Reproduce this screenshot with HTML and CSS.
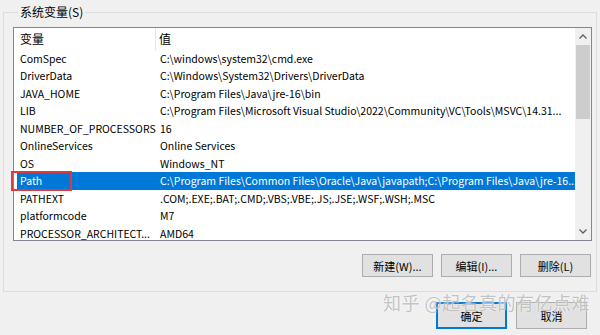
FILE: index.html
```html
<!DOCTYPE html>
<html lang="zh-CN">
<head>
  <meta charset="UTF-8" />
  <title>系统变量</title>
  <link rel="stylesheet" href="styles.css">
</head>
<body>

  <!-- System variables group -->
  <fieldset class="group">
    <legend>系统变量(S)</legend>

    <div class="list-wrap">
      <div class="list">
        <div class="list-body">
          <div class="list-head">
            <div class="head-name">变量</div>
            <div class="head-value">值</div>
          </div>
          <div class="row"><span class="name">ComSpec</span><span class="value">C:\windows\system32\cmd.exe</span></div>
          <div class="row"><span class="name">DriverData</span><span class="value">C:\Windows\System32\Drivers\DriverData</span></div>
          <div class="row"><span class="name">JAVA_HOME</span><span class="value">C:\Program Files\Java\jre-16\bin</span></div>
          <div class="row"><span class="name">LIB</span><span class="value">C:\Program Files\Microsoft Visual Studio\2022\Community\VC\Tools\MSVC\14.31...</span></div>
          <div class="row"><span class="name">NUMBER_OF_PROCESSORS</span><span class="value">16</span></div>
          <div class="row"><span class="name">OnlineServices</span><span class="value">Online Services</span></div>
          <div class="row"><span class="name">OS</span><span class="value">Windows_NT</span></div>
          <div class="row selected"><span class="name">Path</span><span class="value">C:\Program Files\Common Files\Oracle\Java\javapath;C:\Program Files\Java\jre-16...</span></div>
          <div class="row"><span class="name">PATHEXT</span><span class="value">.COM;.EXE;.BAT;.CMD;.VBS;.VBE;.JS;.JSE;.WSF;.WSH;.MSC</span></div>
          <div class="row"><span class="name">platformcode</span><span class="value">M7</span></div>
          <div class="row"><span class="name">PROCESSOR_ARCHITECT...</span><span class="value">AMD64</span></div>
        </div>

        <!-- Vertical scrollbar -->
        <div class="scrollbar">
          <svg class="arrow" width="8" height="5" viewBox="0 0 8 5"><path d="M0.5 4.5 L4 1 L7.5 4.5" fill="none" stroke="#606060" stroke-width="1.3"/></svg>
          <div class="track">
            <div class="thumb"></div>
          </div>
          <svg class="arrow" width="8" height="5" viewBox="0 0 8 5"><path d="M0.5 0.5 L4 4 L7.5 0.5" fill="none" stroke="#606060" stroke-width="1.3"/></svg>
        </div>
      </div>

      <!-- Red highlight drawn over the Path entry -->
      <div class="mark"></div>
    </div>

    <div class="actions">
      <button class="btn">新建(W)...</button>
      <button class="btn">编辑(I)...</button>
      <button class="btn">删除(L)</button>
    </div>
  </fieldset>

  <div class="footer">
    <button class="btn btn-default">确定</button>
    <button class="btn">取消</button>
    <div class="watermark">知乎 @起名真的有亿点难</div>
  </div>

</body>
</html>
```

FILE: styles.css
```css
* {
  box-sizing: border-box;
  margin: 0;
  padding: 0;
}

body {
  background: #f0f0f0;
  font-family: "Noto Sans CJK SC", sans-serif;
  font-size: 12px;
  color: #000;
  width: 600px;
  height: 335px;
  overflow: hidden;
}

.group {
  margin: 4px 3px 0;
  min-width: 0;
  height: 288px;
  border: 1px solid #dcdcdc;
  padding: 0 4px 0 9px;
}

.group legend {
  margin-left: 5px;
  padding: 0 2px;
  line-height: 16px;
  color: #000;
}

.list-wrap {
  position: relative;
  margin-top: 7px;
}

.list {
  display: flex;
  height: 214px;
  background: #fff;
  border: 1px solid #828790;
  overflow: hidden;
}

.list-body {
  flex: 1;
  min-width: 0;
  overflow: hidden;
}

.list-head {
  display: flex;
  height: 21.5px;
  line-height: 21px;
}

.head-name {
  width: 142px;
  padding-left: 6px;
  border-right: 1px solid #e5e5e5;
}

.head-value {
  padding-left: 3px;
}

.row {
  display: flex;
  height: 17.5px;
  line-height: 17.5px;
  margin-left: 3px;
  font-size: 10.5px;
  white-space: nowrap;
}

.row .name {
  width: 143px;
  padding-left: 3px;
  flex-shrink: 0;
  overflow: hidden;
}

.row.selected {
  background: #0078d7;
  color: #fff;
}

.scrollbar {
  width: 16px;
  flex-shrink: 0;
  background: #f0f0f0;
  display: flex;
  flex-direction: column;
  align-items: center;
}

.scrollbar .arrow {
  margin: 6px 0;
}

.track {
  flex: 1;
  width: 100%;
  padding: 0 1px;
}

.thumb {
  height: 74px;
  background: #cdcdcd;
}

.mark {
  position: absolute;
  left: -2px;
  top: 144px;
  width: 61px;
  height: 20px;
  border: 2px solid #e0393e;
}

.actions {
  display: flex;
  justify-content: flex-end;
  gap: 8px;
  margin-top: 13px;
  padding-right: 1px;
}

.btn {
  width: 71px;
  height: 23px;
  background: #e1e1e1;
  border: 1px solid #adadad;
  font-family: inherit;
  font-size: 11px;
  color: #000;
}

.footer {
  position: relative;
  display: flex;
  justify-content: flex-end;
  gap: 9px;
  margin-top: 10px;
  padding-right: 13px;
}

.footer .btn {
  height: 27px;
}

.footer .btn-default {
  border: 2px solid #0078d7;
}

.watermark {
  position: absolute;
  left: 383px;
  top: -13px;
  font-size: 18px;
  letter-spacing: 0.5px;
  color: rgba(185, 185, 185, 0.85);
  text-shadow: 0 0 2px #fff;
  white-space: nowrap;
  pointer-events: none;
}
```
